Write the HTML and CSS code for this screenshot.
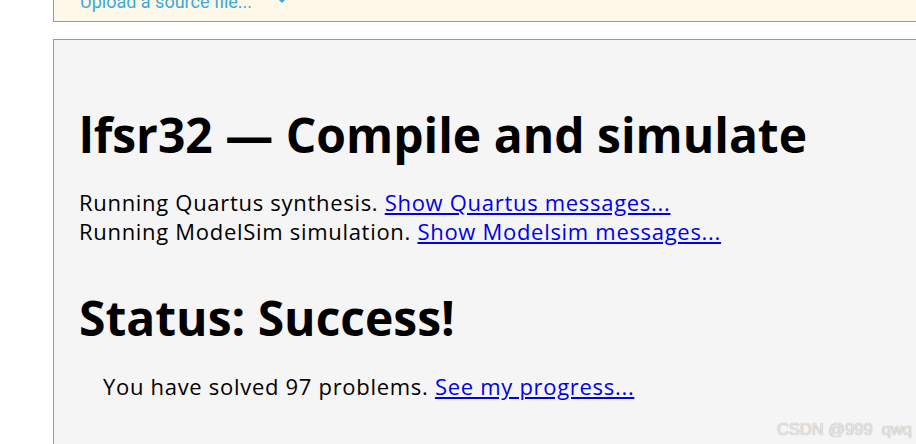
FILE: index.html
```html
<!DOCTYPE html>
<html>
<head>
<meta charset="utf-8">
<link rel="stylesheet" href="styles.css">
</head>
<body>
<div class="upload">
  <div class="upload-row"><span class="upload-link">Upload a source file...</span><svg class="chev" width="12" height="8" viewBox="0 0 12 8"><path d="M2 1.5 L6 5.5 L10 1.5" fill="none" stroke="#38a9d6" stroke-width="2.2"/></svg></div>
</div>
<div class="result">
  <h1 class="title">lfsr32 — Compile and simulate</h1>
  <p class="log">Running Quartus synthesis. <a href="#">Show Quartus messages...</a><br>Running ModelSim simulation. <a href="#">Show Modelsim messages...</a></p>
  <h1 class="status">Status: Success!</h1>
  <p class="solved">You have solved 97 problems. <a href="#">See my progress...</a></p>
</div>
<div class="watermark">CSDN @999&nbsp; qwq</div>
</body>
</html>
```
FILE: styles.css
```css
html, body { margin: 0; padding: 0; background: #fff; overflow: hidden; }
body { width: 916px; height: 444px; position: relative; font-family: "Open Sans", "Noto Sans", sans-serif; }
.upload {
  margin-left: 53px;
  height: 21px;
  background: #fff7e7;
  border: 1px solid #9a9a9a;
  border-top: none;
  border-right: none;
  overflow: hidden;
  position: relative;
}
.upload-row { display: flex; align-items: center; gap: 24px; padding-left: 26px; margin-top: -10px; height: 24px; }
.upload-link { color: #3aaad8; font-size: 18px; font-family: "Roboto", sans-serif; line-height: 24px; }
.chev { margin-top: -4px; }
.result {
  margin-top: 17px;
  margin-left: 53px;
  background: #f5f5f5;
  border: 1px solid #9a9a9a;
  border-right: none;
  border-bottom: none;
  height: 420px;
  padding: 0 0 0 25px;
}
.title, .status {
  font-family: "Open Sans", sans-serif;
  font-weight: 700;
  font-size: 48px;
  margin: 0;
  line-height: 60px;
}
.title { padding-top: 65px; }
.log { margin: 23px 0 0; font-size: 22px; line-height: 29px; letter-spacing: 0.7px; }
.status { margin-top: 42px; }
.solved { margin: 24px 0 0 24px; font-size: 22px; line-height: 29px; letter-spacing: 0.7px; }
a { color: #0000ee; text-decoration: underline; }
.watermark {
  position: absolute; right: 4px; bottom: 5px;
  font-family: "Liberation Sans", sans-serif; font-size: 16.5px;
  color: #e6e6e6; text-shadow: 0 0 1px #999;
}
```
